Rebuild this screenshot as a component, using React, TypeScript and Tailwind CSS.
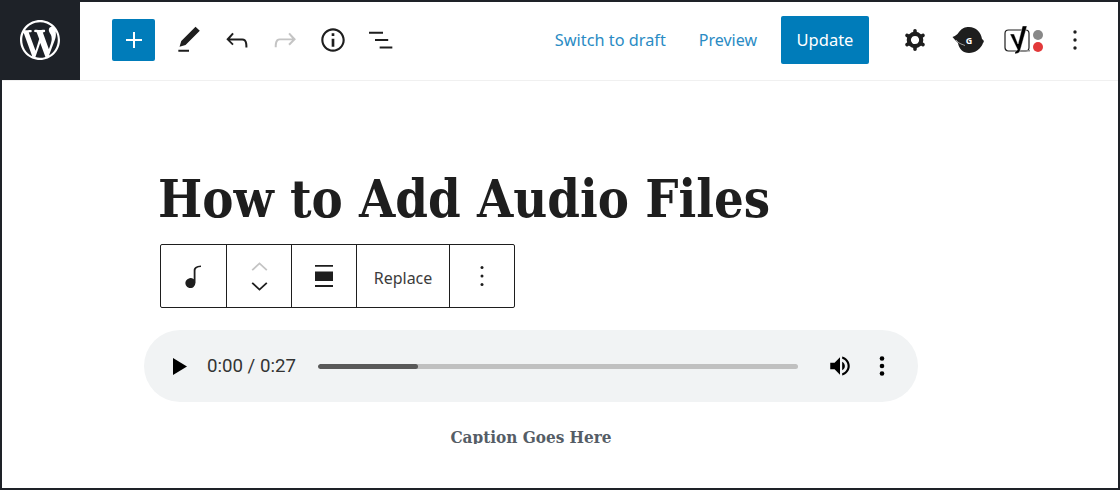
function IconBtn({ children, className = '' }: { children: React.ReactNode; className?: string }) {
  return <div className={`flex h-12 w-12 shrink-0 items-center justify-center ${className}`}>{children}</div>
}

function Tool({ children, className = '' }: { children: React.ReactNode; className?: string }) {
  return (
    <div className={`flex items-center justify-center border-r border-[#1e1e1e] last:border-r-0 ${className}`}>
      {children}
    </div>
  )
}

function Dots({ r, gap, fill = '#1e1e1e' }: { r: number; gap: number; fill?: string }) {
  return (
    <svg width="14" height="28" viewBox="0 0 14 28" fill={fill}>
      <circle cx="7" cy={14 - gap} r={r} />
      <circle cx="7" cy="14" r={r} />
      <circle cx="7" cy={14 + gap} r={r} />
    </svg>
  )
}

export default function App() {
  return (
    <div className="flex h-[490px] w-[1120px] flex-col overflow-hidden border-2 border-[#1e2228] bg-white font-['Noto_Sans',sans-serif] text-[#1e1e1e]">
      {/* Top bar */}
      <header className="-mt-[2px] -ml-[2px] flex h-[81px] shrink-0 items-center border-b border-[#f0f0f0] pr-[25px]">
        <div className="flex h-20 w-20 shrink-0 items-center justify-center self-start bg-[#1e2228]">
          <svg width="40" height="40" viewBox="0 0 20 20" fill="#fff">
            <path d="M20 10c0-5.520-4.480-10-10-10S0 4.480 0 10s4.480 10 10 10 10-4.480 10-10zM7.780 15.370L4.370 6.220c.55-.02 1.170-.08 1.170-.08.5-.06.44-1.130-.06-1.110 0 0-1.450.11-2.370.11-.18 0-.37 0-.58-.01C4.120 2.690 6.870 1.110 10 1.110c2.330 0 4.450.87 6.050 2.340-.68-.11-1.650.39-1.650 1.580 0 .74.45 1.360.9 2.100.35.61.55 1.360.55 2.460 0 1.490-1.400 5-1.400 5l-3.030-8.370c.54-.02.82-.17.82-.17.5-.05.44-1.250-.06-1.220 0 0-1.440.12-2.380.12-.87 0-2.330-.12-2.330-.12-.5-.03-.56 1.200-.06 1.220l.92.08 1.260 3.410zM17.410 10c.24-.64.74-1.870.43-4.250.7 1.290 1.050 2.710 1.050 4.250 0 3.290-1.730 6.240-4.400 7.780.97-2.590 1.940-5.200 2.920-7.780zM6.100 18.090C3.120 16.650 1.110 13.530 1.110 10c0-1.300.23-2.480.72-3.590C3.250 10.300 4.670 14.200 6.100 18.090zm4.030-6.630l2.580 6.980c-.86.29-1.760.45-2.710.45-.79 0-1.570-.11-2.290-.33.81-2.380 1.620-4.740 2.420-7.100z" />
          </svg>
        </div>

        <div className="ml-8 flex h-[42px] w-[43px] shrink-0 items-center justify-center rounded-[2px] bg-[#007cba]">
          <svg width="16" height="16" viewBox="0 0 16 16" fill="#fff">
            <path d="M7 0h2v7h7v2H9v7H7V9H0V7h7z" />
          </svg>
        </div>

        <div className="ml-[10px] flex items-center">
          <IconBtn>
            <svg width="32" height="32" viewBox="0 0 24 24" fill="#1e1e1e">
              <path d="M20.100 5.100L16.900 2 6.200 12.700l-1.300 4.400 4.500-1.300L20.100 5.100zM4 20.800h8v-1.500H4v1.500z" />
            </svg>
          </IconBtn>
          <IconBtn>
            <svg width="32" height="32" viewBox="0 0 24 24" fill="#1e1e1e">
              <path d="M18.300 11.700c-.6-.6-1.400-.9-2.300-.9H6.700l2.900-3.300-1.100-1-4.500 5L8.500 16l1-1-2.700-2.700H16c.5 0 .9.2 1.300.5 1 1 1 3.400 1 4.500v.3h1.500v-.2c0-1.500 0-4.300-1.500-5.700z" />
            </svg>
          </IconBtn>
          <IconBtn>
            <svg width="32" height="32" viewBox="0 0 24 24" fill="#c4c4c4">
              <path d="M15.600 6.500l-1.100 1 2.900 3.300H8c-.9 0-1.700.3-2.300.9-1.400 1.500-1.400 4.200-1.400 5.600v.2h1.500v-.3c0-1.100 0-3.500 1-4.500.3-.3.7-.5 1.300-.5h9.200L14.500 15l1.100 1.100 4.600-4.600-4.600-5z" />
            </svg>
          </IconBtn>
          <IconBtn>
            <svg width="32" height="32" viewBox="0 0 24 24" fill="#1e1e1e">
              <path d="M12 3.200c-4.800 0-8.800 3.900-8.800 8.800 0 4.800 3.900 8.800 8.800 8.800 4.800 0 8.800-3.900 8.800-8.800 0-4.800-4-8.800-8.800-8.800zm0 16c-4 0-7.200-3.300-7.200-7.200C4.800 8 8 4.800 12 4.800s7.200 3.300 7.200 7.200c0 4-3.200 7.200-7.200 7.200zM11 17h2v-6h-2v6zm0-8h2V7h-2v2z" />
            </svg>
          </IconBtn>
          <IconBtn>
            <svg width="32" height="32" viewBox="0 0 24 24" fill="#1e1e1e">
              <path d="M3 5.800h10.500v1.500H3zM7.500 11.300h9.900v1.500H7.500zM11 16.800h9.500v1.500H11z" />
            </svg>
          </IconBtn>
        </div>

        <div className="ml-auto flex items-center text-[16px]">
          <span className="text-[16.300px] text-[#2a8bc4]">Switch to draft</span>
          <span className="ml-[33px] text-[#2a8bc4]">Preview</span>
          <div className="ml-6 flex h-12 w-[88px] items-center justify-center rounded-[2px] bg-[#007cba] text-[16.500px] text-white">
            Update
          </div>
        </div>

        <IconBtn className="ml-[22px]">
          <svg width="24" height="24" viewBox="0 0 24 24">
            <circle cx="12" cy="12" r="6.200" fill="none" stroke="#1e1e1e" strokeWidth="4.200" />
            <path
              d="M12 6V2.800M12 18v3.200M6.800 9L4 7.400M17.200 9L20 7.400M6.800 15L4 16.600M17.200 15L20 16.600"
              stroke="#1e1e1e"
              strokeWidth="3.600"
              strokeLinecap="round"
            />
          </svg>
        </IconBtn>

        {/* Grammarly-like blob */}
        <IconBtn className="ml-[5px]">
          <svg width="34" height="28" viewBox="0 0 34 28">
            <path d="M1.500 11 C4 10 6 9 8 6 C11 2 14 1 18 1 C25 1 30 6 31 13 C33 14 33.500 16 32 17 C30 23 24 27 18 27 C12 27 8 23 7 17 C5 15 3 13 1.500 11z" fill="#1e1e1e" />
            <path d="M5 14 C8 18 12 18.500 14 19.500" stroke="#fff" strokeWidth="0.600" fill="none" />
            <text x="18" y="17.500" fontSize="9" fontWeight="700" fill="#fff" textAnchor="middle" fontFamily="'Noto Sans',sans-serif">G</text>
          </svg>
        </IconBtn>

        <div className="ml-[9px] flex h-12 w-12 shrink-0 items-center justify-center">
          <svg width="42" height="30" viewBox="0 0 42 30">
            <rect x="1" y="5" width="24" height="21" rx="3.500" fill="#fff" stroke="#1e1e1e" strokeWidth="1.200" />
            <path d="M16 25h10v1.500H16z" fill="#8c8c8c" />
            <path d="M10 9l4 10L18.500 1H23L16 26c-.5 1.500-2 2.500-5 3v-2.500c1.500-.3 2-.8 2.500-2L6 9h4z" fill="#000" stroke="#fff" strokeWidth="0.400" />
            <circle cx="34" cy="10" r="5" fill="#888" />
            <circle cx="34" cy="22" r="5" fill="#e2393a" />
          </svg>
        </div>

        <div className="ml-2 flex h-12 w-[36px] shrink-0 items-center justify-center">
          <Dots r={1.700} gap={8} />
        </div>
      </header>

      {/* Editor */}
      <main className="min-h-0 flex-1 overflow-hidden">
        <h1 className="mt-[86px] ml-[156px] font-['DejaVu_Serif_Condensed','DejaVu_Serif',serif] text-[52px] leading-[64px] font-bold whitespace-nowrap text-[#1e1e1e]">
          How to Add Audio Files
        </h1>

        <div className="mt-[13px] ml-[158px] flex h-16 w-[355px] rounded-[2px] border border-[#1e1e1e]">
          <Tool className="w-[66px]">
            <svg width="18" height="24" viewBox="0 0 18 24" fill="#1e1e1e">
              <path d="M8.700 6.500c0-3 2.300-4.800 7.300-5v1.500c-3.500.2-5.500 1.200-5.500 3.600V19h-.1a5 5 0 11-1.700-3.700z" />
            </svg>
          </Tool>
          <Tool className="w-[65px] flex-col gap-[11px]">
            <svg width="17" height="9" viewBox="0 0 17 9" fill="none" stroke="#c4c4c4" strokeWidth="1.800">
              <path d="M1.200 8.200l7.300-6.800 7.300 6.800" />
            </svg>
            <svg width="17" height="9" viewBox="0 0 17 9" fill="none" stroke="#1e1e1e" strokeWidth="1.800">
              <path d="M1.200.8l7.300 6.800 7.300-6.800" />
            </svg>
          </Tool>
          <Tool className="w-[65px]">
            <svg width="18" height="22" viewBox="0 0 18 22" fill="#1e1e1e">
              <path d="M0 0h18v1.800H0zM0 6.500h18v9.500H0zM0 20h18v2H0z" />
            </svg>
          </Tool>
          <Tool className="w-[93px] pt-[3px] text-[16px] text-[#3c3c3c]">Replace</Tool>
          <Tool className="flex-1">
            <Dots r={1.500} gap={8.500} />
          </Tool>
        </div>

        {/* Audio player */}
        <div className="mt-[22px] ml-[142px] flex h-[72px] w-[774px] items-center rounded-[36px] bg-[#f1f3f4] pl-[29px] font-['Roboto',sans-serif]">
          <svg width="14" height="17" viewBox="0 0 14 17" fill="#000">
            <path d="M0 0l14 8.500L0 17z" />
          </svg>
          <span className="ml-[20px] text-[18.670px] whitespace-nowrap text-[#333]">0:00 / 0:27</span>
          <div className="ml-[22px] flex h-[5px] w-[480px] shrink-0 overflow-hidden rounded-full bg-[#c0c0c0]">
            <div className="h-full w-[100px] rounded-full bg-[#595959]" />
          </div>
          <svg width="26" height="26" viewBox="0 0 24 24" fill="#000" className="ml-[29px] shrink-0">
            <path d="M3 9v6h4l5 5V4L7 9H3zm13.500 3c0-1.770-1.020-3.290-2.500-4.030v8.050c1.480-.73 2.500-2.250 2.500-4.020zM14 3.230v2.060c2.890.86 5 3.540 5 6.710s-2.110 5.850-5 6.710v2.060c4.010-.91 7-4.490 7-8.770s-2.990-7.860-7-8.770z" />
          </svg>
          <div className="ml-[22px] shrink-0">
            <Dots r={2.300} gap={7.500} fill="#000" />
          </div>
        </div>

        <div className="mt-[23px] ml-[142px] h-[19px] w-[774px] overflow-hidden text-center font-['DejaVu_Serif_Condensed','DejaVu_Serif',serif] text-[17px] leading-[24px] font-bold text-[#555d66]">
          Caption Goes Here
        </div>
      </main>
    </div>
  )
}
